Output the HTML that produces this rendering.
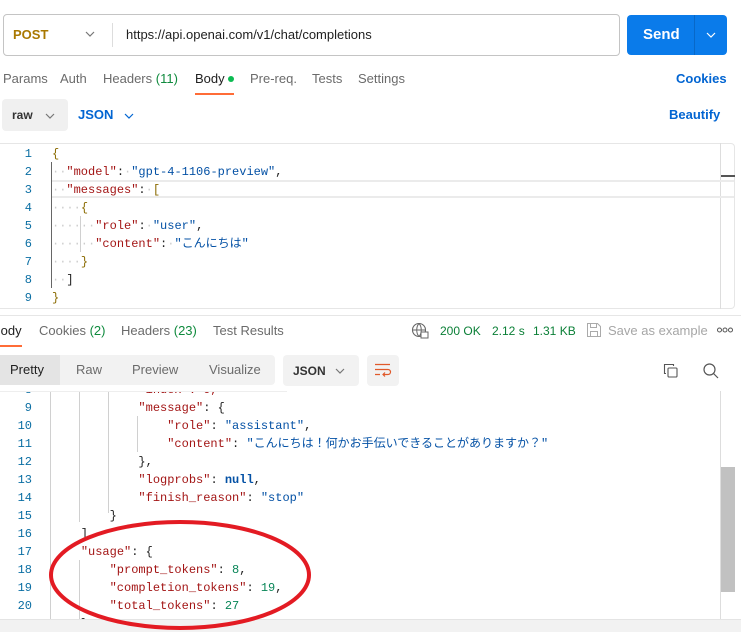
<!DOCTYPE html>
<html><head><meta charset="utf-8"><style>
*{margin:0;padding:0;box-sizing:border-box}
body{width:741px;height:632px;background:#fff;position:relative;overflow:hidden;font-family:"Liberation Sans","Noto Sans CJK JP",sans-serif;font-size:13px;color:#6b6b6b}
.a{position:absolute;white-space:nowrap}
.m{font-family:"Liberation Mono","Noto Sans CJK JP",monospace;font-size:12px;color:#212121}
.k{color:#a31515}.s{color:#0451a5}.n{color:#098658}.d{color:#ccc}
.vl{position:absolute;width:1px;background:#d0d0d0}
</style></head><body>
<!-- URL bar -->
<div class="a" style="left:3px;top:14px;width:617px;height:42px;border:1px solid #c4c4c4;border-radius:4px"></div>
<div class="a" style="left:13px;top:27px;color:#a97800;font-weight:bold;font-size:13px">POST</div>
<svg class="a" style="left:85px;top:31px" width="10" height="6"><path d="M1 1l4 4 4-4" fill="none" stroke="#777" stroke-width="1.2"/></svg>
<div class="a" style="left:112px;top:23px;width:1px;height:24px;background:#ddd"></div>
<div class="a" style="left:126px;top:27px;color:#212121">https://api.openai.com/v1/chat/completions</div>
<div class="a" style="left:627px;top:15px;width:100px;height:40px;background:#0a7bea;border-radius:4px"></div>
<div class="a" style="left:694px;top:15px;width:1px;height:40px;background:#0868c8"></div>
<div class="a" style="left:643px;top:26px;color:#fff;font-weight:bold;font-size:15px">Send</div>
<svg class="a" style="left:706px;top:32px" width="10" height="6"><path d="M1 1l4 4 4-4" fill="none" stroke="#fff" stroke-width="1.2"/></svg>
<!-- tabs -->
<div class="a" style="left:3px;top:71px">Params</div>
<div class="a" style="left:60px;top:71px">Auth</div>
<div class="a" style="left:103px;top:71px">Headers <span style="color:#0f8a3d">(11)</span></div>
<div class="a" style="left:195px;top:71px;color:#212121">Body</div>
<div class="a" style="left:228px;top:76px;width:6px;height:6px;border-radius:3px;background:#0cbb52"></div>
<div class="a" style="left:195px;top:93px;width:39px;height:2px;background:#ff6c37"></div>
<div class="a" style="left:250px;top:71px">Pre-req.</div>
<div class="a" style="left:312px;top:71px">Tests</div>
<div class="a" style="left:358px;top:71px">Settings</div>
<div class="a" style="left:676px;top:71px;color:#0265d2;font-weight:bold">Cookies</div>
<div class="a" style="left:2px;top:99px;width:66px;height:32px;background:#f0f0f0;border-radius:4px"></div>
<div class="a" style="left:12px;top:108px;color:#333;font-size:12px;font-weight:bold">raw</div>
<svg class="a" style="left:45px;top:113px" width="10" height="6"><path d="M1 1l4 4 4-4" fill="none" stroke="#777" stroke-width="1.2"/></svg>
<div class="a" style="left:78px;top:107px;color:#0265d2;font-weight:bold">JSON</div>
<svg class="a" style="left:124px;top:113px" width="10" height="6"><path d="M1 1l4 4 4-4" fill="none" stroke="#0265d2" stroke-width="1.2"/></svg>
<div class="a" style="left:669px;top:107px;color:#0265d2;font-weight:bold">Beautify</div>
<!-- top editor -->
<div class="a" style="left:0;top:143px;width:735px;height:166px;border-top:1px solid #e6e6e6;border-bottom:1px solid #e6e6e6;border-right:1px solid #e6e6e6;border-radius:0 4px 4px 0"></div>
<div class="a" style="left:720px;top:143px;width:1px;height:166px;background:#ddd"></div>
<div class="a" style="left:721px;top:175px;width:14px;height:2px;background:#555"></div>
<div class="a" style="left:51px;top:180px;width:683px;height:18px;border-top:2px solid #ebebeb;border-bottom:2px solid #ebebeb"></div>
<div class="vl" style="left:51px;top:162px;height:126px;background:#666"></div>
<div class="vl" style="left:80px;top:216px;height:36px"></div>
<div class="a m" style="left:0;top:145px;line-height:18px">
<div style="position:absolute;left:0;width:32px;text-align:right;color:#0a6ea3">1<br>2<br>3<br>4<br>5<br>6<br>7<br>8<br>9</div>
<div style="position:absolute;left:52px"><span style="color:#8a6a00">{</span><br><span class="d">··</span><span class="k">"model"</span>:<span class="d">·</span><span class="s">"gpt-4-1106-preview"</span>,<br><span class="d">··</span><span class="k">"messages"</span>:<span class="d">·</span><span style="color:#8a6a00">[</span><br><span class="d">····</span><span style="color:#8a6a00">{</span><br><span class="d">······</span><span class="k">"role"</span>:<span class="d">·</span><span class="s">"user"</span>,<br><span class="d">······</span><span class="k">"content"</span>:<span class="d">·</span><span class="s">"こんにちは"</span><br><span class="d">····</span><span style="color:#8a6a00">}</span><br><span class="d">··</span>]<br><span style="color:#8a6a00">}</span></div>
</div>
<!-- response -->
<div class="a" style="left:0;top:315px;width:741px;height:1px;background:#e6e6e6"></div>
<div class="a" style="left:-8px;top:323px;color:#212121">Body</div>
<div class="a" style="left:0;top:345px;width:22px;height:2px;background:#ff6c37"></div>
<div class="a" style="left:39px;top:323px">Cookies <span style="color:#0f8a3d">(2)</span></div>
<div class="a" style="left:121px;top:323px">Headers <span style="color:#0f8a3d">(23)</span></div>
<div class="a" style="left:213px;top:323px">Test Results</div>
<svg class="a" style="left:411px;top:322px" width="18" height="18"><circle cx="8" cy="8" r="6.5" fill="none" stroke="#666" stroke-width="1.1"/><path d="M1.5 8h13M8 1.5c-3 3-3 10 0 13M8 1.5c3 3 3 10 0 13" fill="none" stroke="#666"/><rect x="10" y="10" width="7" height="6" fill="#fff" stroke="#666"/></svg>
<div class="a" style="left:440px;top:324px;color:#0a7f36;font-size:12px">200 OK</div>
<div class="a" style="left:492px;top:324px;color:#0a7f36;font-size:12px">2.12 s</div>
<div class="a" style="left:533px;top:324px;color:#0a7f36;font-size:12px">1.31 KB</div>
<svg class="a" style="left:586px;top:322px" width="16" height="16"><path d="M1.5 1.5h10l3 3v10h-13z M4.5 1.5v4h6v-4 M4.5 14.5v-5h7v5" fill="none" stroke="#aaa"/></svg>
<div class="a" style="left:608px;top:323px;color:#a6a6a6">Save as example</div>
<svg class="a" style="left:717px;top:327px" width="16" height="6"><circle cx="2.5" cy="3" r="2" fill="none" stroke="#555"/><circle cx="8" cy="3" r="2" fill="none" stroke="#555"/><circle cx="13.5" cy="3" r="2" fill="none" stroke="#555"/></svg>
<div class="a" style="left:0;top:355px;width:275px;height:30px;background:#f2f2f2;border-radius:0 4px 4px 0"></div>
<div class="a" style="left:0;top:355px;width:60px;height:30px;background:#e4e4e4"></div>
<div class="a" style="left:10px;top:362px;color:#212121">Pretty</div>
<div class="a" style="left:76px;top:362px">Raw</div>
<div class="a" style="left:132px;top:362px">Preview</div>
<div class="a" style="left:209px;top:362px">Visualize</div>
<div class="a" style="left:283px;top:355px;width:76px;height:31px;background:#f2f2f2;border-radius:4px"></div>
<div class="a" style="left:293px;top:364px;color:#333;font-size:12px;font-weight:bold">JSON</div>
<svg class="a" style="left:335px;top:368px" width="10" height="6"><path d="M1 1l4 4 4-4" fill="none" stroke="#777" stroke-width="1.2"/></svg>
<div class="a" style="left:367px;top:355px;width:32px;height:31px;background:#f2f2f2;border-radius:4px"></div>
<svg class="a" style="left:374px;top:362px" width="18" height="16"><path d="M1 2.5h15M1 7.5h13a2.5 2.5 0 0 1 0 5h-5M11 10.5l-2 2 2 2M1 12.5h5" fill="none" stroke="#e0592a" stroke-width="1.2"/></svg>
<svg class="a" style="left:662px;top:362px" width="18" height="18"><path d="M4 11.5h-1.5v-9h9v1.5" fill="none" stroke="#555" stroke-width="1.1"/><rect x="6" y="6" width="9" height="9" rx="1" fill="none" stroke="#555" stroke-width="1.1"/></svg>
<svg class="a" style="left:702px;top:362px" width="18" height="18"><circle cx="7.5" cy="7.5" r="5.5" fill="none" stroke="#555" stroke-width="1.2"/><path d="M11.5 11.5l4.5 4.5" stroke="#555" stroke-width="1.2"/></svg>
<div class="a" style="left:0;top:391px;width:287px;height:1px;background:#eee"></div>
<!-- response editor -->
<div class="a" style="left:720px;top:391px;width:1px;height:228px;background:#ddd"></div>
<div class="a" style="left:721px;top:467px;width:14px;height:125px;background:#c1c1c1"></div>
<div class="a" style="left:0;top:392px;width:720px;height:227px;overflow:hidden">
<div class="vl" style="left:50px;top:0;height:227px"></div>
<div class="vl" style="left:79px;top:0;height:130px"></div>
<div class="vl" style="left:108px;top:0;height:121px"></div>
<div class="vl" style="left:79px;top:168px;height:59px"></div>
<div class="vl" style="left:137px;top:24px;height:36px"></div>
<div class="a m" style="left:0;top:-11px;line-height:18px">
<div style="position:absolute;left:0;width:32px;text-align:right;color:#0a6ea3">8<br>9<br>10<br>11<br>12<br>13<br>14<br>15<br>16<br>17<br>18<br>19<br>20<br>21</div>
<div style="position:absolute;left:52px;white-space:pre"><span class="k">            "index": 0,</span>
            <span class="k">"message"</span>: {
                <span class="k">"role"</span>: <span class="s">"assistant"</span>,
                <span class="k">"content"</span>: <span class="s">"こんにちは！何かお手伝いできることがありますか？"</span>
            },
            <span class="k">"logprobs"</span>: <b style="color:#0451a5">null</b>,
            <span class="k">"finish_reason"</span>: <span class="s">"stop"</span>
        }
    ]
    <span class="k">"usage"</span>: {
        <span class="k">"prompt_tokens"</span>: <span class="n">8</span>,
        <span class="k">"completion_tokens"</span>: <span class="n">19</span>,
        <span class="k">"total_tokens"</span>: <span class="n">27</span>
    }</div>
</div>
</div>
<div class="a" style="left:0;top:619px;width:741px;height:13px;background:#f2f2f2;border-top:1px solid #e4e4e4"></div>
<svg class="a" style="left:0;top:0" width="741" height="632"><ellipse cx="180" cy="575" rx="129" ry="53" fill="none" stroke="#e31b23" stroke-width="4"/></svg>
</body></html>
